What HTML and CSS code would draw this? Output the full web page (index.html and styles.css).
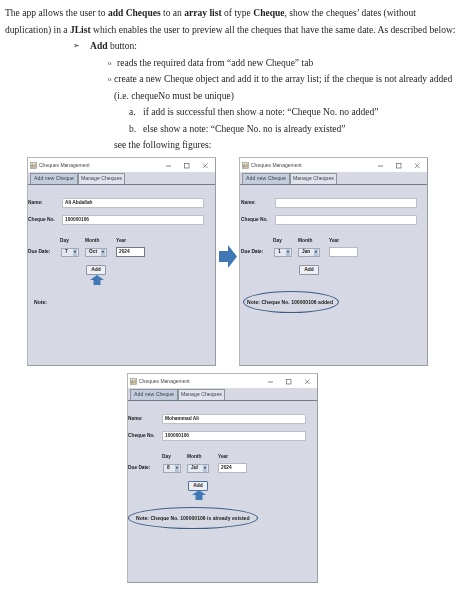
FILE: index.html
```html
<!DOCTYPE html>
<html lang="en">
<head>
<meta charset="utf-8">
<title>Cheques Management</title>
<link rel="stylesheet" href="styles.css">
</head>
<body>
<svg class="defs" width="0" height="0" aria-hidden="true">
  <symbol id="appicon" viewBox="0 0 8 8"><rect x=".5" y=".5" width="7" height="7" fill="#e8e4d8" stroke="#8d8d80" stroke-width=".7"/><path d="M1.5 6.5V3M3 6.5V2M4.500 6.500V3M6 6.500V2" stroke="#8a7a50" stroke-width=".8"/></symbol>
  <symbol id="controls" viewBox="0 0 42 7"><path d="M0 4H5" stroke="#666" stroke-width=".8"/><rect x="18.500" y="1.500" width="4.500" height="4.500" fill="none" stroke="#666" stroke-width=".7"/><path d="M37 1.500l4.500 4.500M41.500 1.500l-4.500 4.500" stroke="#666" stroke-width=".7"/></symbol>
  <symbol id="uparrow" viewBox="0 0 14 10"><path d="M7 0L14 5H10.500V10H3.500V5H0Z" fill="#3f78b5"/></symbol>
</svg>
<main class="doc">
  <div class="text">
    <p class="line l0">The app allows the user to <b>add Cheques</b> to an <b>array list</b> of type <b>Cheque</b>, show the cheques’ dates (without</p>
    <p class="line l0">duplication) in a <b>JList</b> which enables the user to preview all the cheques that have the same date. As described below:</p>
    <p class="line l1"><span class="mark-arrow">➢</span><span><b>Add</b> button:</span></p>
    <p class="line l2"><span class="mark-o">o</span><span>reads the required data from “add new Cheque” tab</span></p>
    <p class="line l3"><span class="mark-o tight">o</span><span>create a new Cheque object and add it to the array list; if the cheque is not already added</span></p>
    <p class="line l4">(i.e. chequeNo must be unique)</p>
    <p class="line l5"><span class="mark-n">a.</span><span>if add is successful then show a note: “Cheque No. no added”</span></p>
    <p class="line l5"><span class="mark-n">b.</span><span>else show a note: “Cheque No. no is already existed”</span></p>
    <p class="line l4">see the following figures:</p>
  </div>

  <div class="figs">
    <section class="win win-a">
      <header class="title"><svg class="appicon"><use href="#appicon"/></svg><span class="title-text">Cheques Management</span><svg class="controls"><use href="#controls"/></svg></header>
      <nav class="tabs"><span class="tab active">Add new Cheque</span><span class="tab">Manage Cheques</span></nav>
      <form class="form">
        <div class="row"><label>Name:</label><span class="field">Ali Abdallah</span></div>
        <div class="row"><label>Cheque No.</label><span class="field">100000106</span></div>
        <div class="dates">
          <span></span><b>Day</b><b>Month</b><b>Year</b>
          <b>Due Date:</b>
          <span class="sel s-day">7<i></i></span><span class="sel s-month">Oct<i></i></span><span class="year focus">2024</span>
        </div>
        <div class="add-row"><span class="add">Add<svg class="uparrow"><use href="#uparrow"/></svg></span></div>
        <div class="note">Note:</div>
      </form>
    </section>

    <svg class="bigarrow" viewBox="0 0 18 23"><path d="M0 6H9V0L18 11.500L9 23V17H0Z" fill="#3f78b5"/></svg>

    <section class="win win-b">
      <header class="title"><svg class="appicon"><use href="#appicon"/></svg><span class="title-text">Cheques Management</span><svg class="controls"><use href="#controls"/></svg></header>
      <nav class="tabs"><span class="tab active">Add new Cheque</span><span class="tab">Manage Cheques</span></nav>
      <form class="form">
        <div class="row"><label>Name:</label><span class="field"></span></div>
        <div class="row"><label>Cheque No.</label><span class="field"></span></div>
        <div class="dates">
          <span></span><b>Day</b><b>Month</b><b>Year</b>
          <b>Due Date:</b>
          <span class="sel s-day">1<i></i></span><span class="sel s-month">Jan<i></i></span><span class="year"></span>
        </div>
        <div class="add-row"><span class="add">Add</span></div>
        <div class="note ring ring-b">Note: Cheque No. 100000106 added</div>
      </form>
    </section>
  </div>

  <div class="figs fig-c">
    <section class="win win-c">
      <header class="title"><svg class="appicon"><use href="#appicon"/></svg><span class="title-text">Cheques Management</span><svg class="controls"><use href="#controls"/></svg></header>
      <nav class="tabs"><span class="tab active">Add new Cheque</span><span class="tab">Manage Cheques</span></nav>
      <form class="form">
        <div class="row"><label>Name:</label><span class="field">Mohammad Ali</span></div>
        <div class="row"><label>Cheque No.</label><span class="field">100000106</span></div>
        <div class="dates">
          <span></span><b>Day</b><b>Month</b><b>Year</b>
          <b>Due Date:</b>
          <span class="sel s-day">8<i></i></span><span class="sel s-month">Jul<i></i></span><span class="year">2024</span>
        </div>
        <div class="add-row"><span class="add focus">Add<svg class="uparrow"><use href="#uparrow"/></svg></span></div>
        <div class="note ring ring-c">Note: Cheque No. 100000106 is already existed</div>
      </form>
    </section>
  </div>
</main>
</body>
</html>
```
FILE: styles.css
```css
* { box-sizing: border-box; }
html, body { margin: 0; padding: 0; background: #fff; }
body { width: 474px; height: 602px; overflow: hidden; }
.defs { display: block; height: 0; }
.doc { filter: blur(0.35px); }

.text { padding: 5px 0 0 5px; font: 9.55px/16.500px "Liberation Serif", "Times New Roman", serif; color: #1e1e1e; }
.line { margin: 0; height: 16.500px; white-space: nowrap; display: flex; }
.l0 { display: block; }
.l1 { padding-left: 68px; }
.l2 { padding-left: 103px; }
.l3 { padding-left: 103px; }
.l4 { display: block; padding-left: 109px; }
.l5 { padding-left: 124px; }
.mark-arrow { width: 17px; font: 8px/16.500px "DejaVu Sans", sans-serif; }
.mark-o { width: 9px; font-size: 7px; }
.mark-o.tight { width: 6px; }
.mark-n { width: 14px; }

.figs { display: flex; align-items: flex-start; padding-left: 27px; margin-top: 3.500px; }
.fig-c { padding-left: 127px; margin-top: 7px; }
.bigarrow { width: 18px; height: 23px; margin: 88px 3px 0 3px; flex: none; }

.win { width: 189px; height: 209px; flex: none; display: flex; flex-direction: column; background: #d6d9e4; border: 1px solid #b4b6bb; border-right: 1.500px solid #999ba2; border-bottom: 1.500px solid #999ba2; font: 4.800px/1 "Liberation Sans", Arial, sans-serif; color: #1a1a1a; }
.win-b { margin-left: -1px; }
.win-c { width: 191px; height: 210px; }

.title { height: 14px; flex: none; display: flex; align-items: center; background: #fff; padding-left: 2px; color: #444; }
.appicon { width: 7px; height: 7px; flex: none; }
.title-text { margin-left: 2px; font-size: 5px; flex: 1; }
.controls { width: 42px; height: 7px; margin-right: 7px; flex: none; }

.tabs { height: 12.500px; flex: none; display: flex; align-items: flex-end; padding-left: 2px; border-bottom: 1.500px solid #737b8a; }
.tab { width: 47px; height: 10.500px; display: flex; align-items: center; justify-content: center; font-size: 5.200px; color: #3c4350; border: 0.600px solid #8f939b; border-bottom: 0; background: #e1e3ea; }
.tab.active { width: 48px; background: #c3cddd; }

.form { flex: 1; padding-top: 14px; }
.win-b .form { padding-left: 1px; }
.row { display: flex; align-items: center; height: 9px; margin-bottom: 8px; }
.row label { width: 34px; flex: none; font-weight: bold; white-space: nowrap; }
.field { width: 142px; height: 9.500px; flex: none; display: flex; align-items: center; padding-left: 2px; background: #fff; border: 0.500px solid #bcc0c8; font-weight: bold; }
.win-c .field { width: 144px; }

.dates { display: grid; grid-template-columns: 32px 25px 31px 30px; row-gap: 4px; align-items: center; margin-top: 14px; white-space: nowrap; }
.win-c .dates { grid-template-columns: 34px 25px 31px 30px; }
.sel { height: 9px; display: flex; align-items: center; justify-content: space-between; padding: 0 1px 0 3px; background: #e4e8f0; border: 0.600px solid #a3a9b4; font-weight: bold; }
.sel i { width: 4px; height: 7px; background: #b4c4da; position: relative; }
.sel i::after { content: ""; position: absolute; left: 0.500px; top: 2.500px; border: 1.500px solid transparent; border-top: 2px solid #222; border-bottom: 0; }
.s-day { width: 18px; margin-left: 1px; }
.s-month { width: 22px; }
.year { width: 29px; height: 10px; display: flex; align-items: center; padding-left: 2px; background: #fff; border: 0.500px solid #b5b9c2; font-weight: bold; }
.year.focus { border: 0.800px solid #6d7888; }

.add-row { margin-top: 8px; padding-left: 58px; display: flex; }
.win-c .add-row { padding-left: 60px; }
.add { position: relative; width: 20px; height: 10px; display: flex; align-items: center; justify-content: center; background: #eef0f5; border: 0.800px solid #8d95a4; border-radius: 1px; font-weight: bold; }
.add.focus { border-color: #4c6f9e; }
.uparrow { position: absolute; left: 3px; top: 9px; width: 14px; height: 10px; }
.focus .uparrow { top: 7.500px; }

.note { display: flex; align-items: center; height: 22px; margin-top: 16px; padding-left: 6px; font-size: 5.100px; font-weight: bold; white-space: nowrap; }
.ring { border: 0.800px solid #3d5a86; border-radius: 50%; }
.ring-b { width: 96px; margin-left: 2px; padding-left: 3px; }
.ring-c { width: 130px; padding-left: 7px; }
```
